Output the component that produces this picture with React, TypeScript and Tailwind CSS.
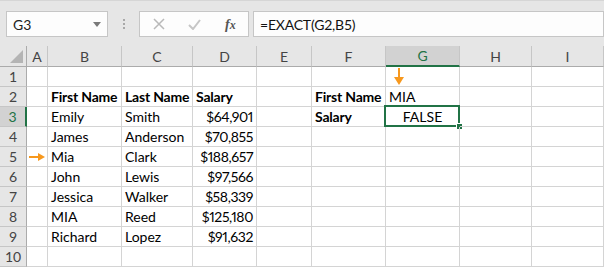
import React from 'react';

const cols = ['A', 'B', 'C', 'D', 'E', 'F', 'G', 'H', 'I'];

type Cell = { t?: string; b?: boolean; r?: boolean; c?: boolean };

const rows: Record<number, Record<string, Cell>> = {
  2: { B: { t: 'First Name', b: true }, C: { t: 'Last Name', b: true }, D: { t: 'Salary', b: true }, F: { t: 'First Name', b: true }, G: { t: 'MIA' } },
  3: { B: { t: 'Emily' }, C: { t: 'Smith' }, D: { t: '$64,901', r: true }, F: { t: 'Salary', b: true }, G: { t: 'FALSE', c: true } },
  4: { B: { t: 'James' }, C: { t: 'Anderson' }, D: { t: '$70,855', r: true } },
  5: { B: { t: 'Mia' }, C: { t: 'Clark' }, D: { t: '$188,657', r: true } },
  6: { B: { t: 'John' }, C: { t: 'Lewis' }, D: { t: '$97,566', r: true } },
  7: { B: { t: 'Jessica' }, C: { t: 'Walker' }, D: { t: '$58,339', r: true } },
  8: { B: { t: 'MIA' }, C: { t: 'Reed' }, D: { t: '$125,180', r: true } },
  9: { B: { t: 'Richard' }, C: { t: 'Lopez' }, D: { t: '$91,632', r: true } },
};

function RightArrow() {
  return (
    <svg width="16" height="8" viewBox="0 0 16 8" className="absolute left-[2px] top-[6px]">
      <rect x="0" y="3" width="10" height="2" fill="#f7981d" />
      <path d="M9 0 L16 4 L9 8 Z" fill="#f7981d" />
    </svg>
  );
}

function DownArrow() {
  return (
    <svg width="10" height="17" viewBox="0 0 10 17" className="absolute left-[8px] top-[1px]">
      <rect x="4" y="0" width="2" height="11" fill="#f7981d" />
      <path d="M0 9 L5 17 L10 9 Z" fill="#f7981d" />
    </svg>
  );
}

export default function App() {
  const font = { fontFamily: 'Lato, "Liberation Sans", Arial, sans-serif' };
  return (
    <div className="w-[604px] h-[267px] overflow-hidden bg-white" style={font}>
      {/* toolbar */}
      <div className="h-[46px] bg-[#e6e6e6] border-t border-[#d6d6d6] flex items-start pt-[10px] pl-[6px]">
        <div className="w-[102px] h-[26px] bg-[#fdfdfd] border border-[#c6c6c6] flex items-center justify-between pl-[6px] pr-[6px] text-[14px] text-[#222]">
          <span>G3</span>
          <svg width="8" height="5" viewBox="0 0 8 5"><path d="M0 0 L8 0 L4 5 Z" fill="#7a7a7a" /></svg>
        </div>
        <div className="w-[31px] h-[26px] flex flex-col items-center justify-center gap-[2px]">
          <span className="w-[2px] h-[2px] bg-[#a8a8a8]" />
          <span className="w-[2px] h-[2px] bg-[#a8a8a8]" />
          <span className="w-[2px] h-[2px] bg-[#a8a8a8]" />
        </div>
        <div className="w-[110px] h-[26px] bg-[#fdfdfd] border border-[#c6c6c6] flex items-center">
          <svg width="12" height="12" viewBox="0 0 12 12" className="ml-[13px]">
            <path d="M1 1 L11 11 M11 1 L1 11" stroke="#b9b9b9" strokeWidth="1.5" />
          </svg>
          <svg width="13" height="11" viewBox="0 0 13 11" className="ml-[23px]">
            <path d="M1 6 L5 10 L12 1" stroke="#c6c6c6" strokeWidth="2" fill="none" />
          </svg>
          <span className="ml-[24px] text-[14px] italic font-bold text-[#555]" style={{ fontFamily: '"Liberation Serif", serif' }}>
            f<span className="text-[12px]">x</span>
          </span>
        </div>
        <div className="ml-[4px] w-[351px] h-[26px] bg-[#fdfdfd] border border-[#c6c6c6] flex items-center pl-[6px] text-[14px] tracking-[-0.2px] text-[#111]">
          =EXACT(G2,B5)
        </div>
      </div>

      {/* grid */}
      <div className="grid grid-cols-[27px_21px_74px_71px_64px_55px_74px_74px_72px_72px] text-[14px] text-black">
        {/* header row */}
        <div className="h-[21px] bg-[#e6e6e6] border-r border-b border-[#ababab] relative">
          <svg width="13" height="13" viewBox="0 0 13 13" className="absolute right-[3px] bottom-[3px]">
            <path d="M13 0 L13 13 L0 13 Z" fill="#b4b4b4" />
          </svg>
        </div>
        {cols.map((c) =>
          c === 'G' ? (
            <div key={c} className="h-[21px] bg-[#d2d2d2] border-r border-r-[#c6c6c6] border-b-2 border-b-[#217346] flex items-center justify-center text-[#217346]">
              {c}
            </div>
          ) : (
            <div key={c} className="h-[21px] bg-[#e6e6e6] border-r border-r-[#c6c6c6] border-b border-b-[#ababab] flex items-center justify-center text-[#444]">
              {c}
            </div>
          )
        )}

        {Array.from({ length: 10 }, (_, i) => i + 1).map((r) => (
          <React.Fragment key={r}>
            {r === 3 ? (
              <div className="h-[20px] bg-[#d2d2d2] border-r-2 border-r-[#217346] border-b border-b-[#c6c6c6] flex items-center justify-center text-[#217346]">
                {r}
              </div>
            ) : (
              <div className="h-[20px] bg-[#e6e6e6] border-r border-r-[#ababab] border-b border-b-[#c6c6c6] flex items-center justify-center text-[#444]">
                {r}
              </div>
            )}
            {cols.map((c) => {
              const cell = rows[r]?.[c];
              const selected = r === 3 && c === 'G';
              return (
                <div
                  key={c}
                  className={`h-[20px] border-r border-b border-[#d4d4d4] relative flex items-end pb-[2px] leading-none whitespace-nowrap ${
                    cell?.r ? 'justify-end pr-[3px] proportional-nums tracking-[-0.4px]' : cell?.c ? 'justify-center' : 'pl-[3px]'
                  } ${cell?.b ? 'font-bold tracking-[-0.2px]' : ''}`}
                >
                  {cell?.t}
                  {r === 5 && c === 'A' && <RightArrow />}
                  {r === 1 && c === 'G' && <DownArrow />}
                  {selected && (
                    <>
                      <div className="absolute -left-[2px] -top-[2px] -right-[1px] -bottom-[1px] border-2 border-[#217346]" />
                      <div className="absolute left-[70px] top-[16px] w-[7px] h-[7px] bg-[#217346] border border-white" />
                    </>
                  )}
                </div>
              );
            })}
          </React.Fragment>
        ))}
      </div>
    </div>
  );
}
